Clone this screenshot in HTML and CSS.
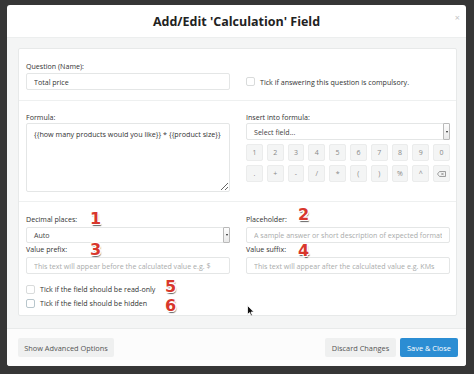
FILE: index.html
```html
<!DOCTYPE html>
<html>
<head>
<meta charset="utf-8">
<link rel="stylesheet" href="styles.css">
</head>
<body>
<div class="modal">
  <div class="header">
    <div class="title">Add/Edit 'Calculation' Field</div>
    <div class="close">×</div>
  </div>
  <div class="body">
    <div class="panel">
      <div class="section s1">
        <div class="col">
          <div class="label">Question (Name):</div>
          <input class="input" type="text" value="Total price">
        </div>
        <div class="col">
          <div class="label"></div>
          <label class="check inline"><input type="checkbox" class="cb"><span>Tick if answering this question is compulsory.</span></label>
        </div>
      </div>
      <div class="section s2">
        <div class="col">
          <div class="label">Formula:</div>
          <textarea class="textarea">{{how many products would you like}} * {{product size}}</textarea>
        </div>
        <div class="col">
          <div class="label">Insert into formula:</div>
          <div class="select"><span>Select field...</span><span class="arrow"></span></div>
          <div class="keypad">
            <button class="key">1</button><button class="key">2</button><button class="key">3</button><button class="key">4</button><button class="key">5</button><button class="key">6</button><button class="key">7</button><button class="key">8</button><button class="key">9</button><button class="key">0</button>
            <button class="key">.</button><button class="key">+</button><button class="key">-</button><button class="key">/</button><button class="key">*</button><button class="key">(</button><button class="key">)</button><button class="key">%</button><button class="key">^</button><button class="key"><svg width="9" height="6" viewBox="0 0 9 6"><path d="M2.5 0.5H8.5V5.5H2.5L0.5 3Z" fill="none" stroke="#888" stroke-width="0.8"/><path d="M4.3 1.8L6.6 4.2M6.6 1.8L4.3 4.2" stroke="#888" stroke-width="0.8"/></svg></button>
          </div>
        </div>
      </div>
      <div class="section s3">
        <div class="grid">
          <div class="col">
            <div class="label">Decimal places:</div>
            <div class="select short"><span class="val">Auto</span><span class="arrow"></span></div>
            <div class="label second">Value prefix:</div>
            <input class="input" type="text" placeholder="This text will appear before the calculated value e.g. $">
          </div>
          <div class="col">
            <div class="label">Placeholder:</div>
            <input class="input short" type="text" placeholder="A sample answer or short description of expected format">
            <div class="label second">Value suffix:</div>
            <input class="input" type="text" placeholder="This text will appear after the calculated value e.g. KMs">
          </div>
        </div>
        <div class="checks">
          <label class="check"><input type="checkbox" class="cb"><span>Tick if the field should be read-only</span></label>
          <label class="check"><input type="checkbox" class="cb focus"><span>Tick if the field should be hidden</span></label>
        </div>
      </div>
    </div>
  </div>
  <div class="footer">
    <button class="btn adv">Show Advanced Options</button>
    <div class="right">
      <button class="btn discard">Discard Changes</button>
      <button class="btn save">Save &amp; Close</button>
    </div>
  </div>
</div>

<span class="mark m1">1</span>
<span class="mark m2">2</span>
<span class="mark m3">3</span>
<span class="mark m4">4</span>
<span class="mark m5">5</span>
<span class="mark m6">6</span>

<svg class="cursor" width="8" height="12" viewBox="0 0 8 12"><path d="M0.5 0.5V9.5L2.6 7.6L4 11L5.4 10.4L4 7.1H6.9Z" fill="#111" stroke="#fff" stroke-width="0.8"/></svg>
</body>
</html>
```

FILE: styles.css
```css
* { box-sizing: border-box; }

body {
  margin: 0;
  width: 474px;
  height: 374px;
  overflow: hidden;
  position: relative;
  background: #363636;
  font-family: "Open Sans", "DejaVu Sans", sans-serif;
  padding: 5px 8px 8px 7px;
}

.modal {
  width: 459px;
  height: 361px;
  background: #fff;
  border-radius: 3px;
  display: flex;
  flex-direction: column;
  overflow: hidden;
}

.header {
  height: 33px;
  flex: none;
  display: flex;
  align-items: center;
  justify-content: center;
  position: relative;
  border-bottom: 1px solid #eceeee;
}

.title {
  font-size: 12.5px;
  font-weight: 700;
  color: #222;
}

.close {
  position: absolute;
  right: 6px;
  top: 6px;
  font-size: 9px;
  color: #c4c4c4;
}

.body {
  flex: none;
  height: 290px;
  background: #f4f5f5;
  padding: 10px 9px 10px 11px;
}

.panel {
  background: #fff;
  border: 1px solid #e7e9e9;
  border-radius: 2px;
}

.section {
  padding: 11px 6px 10px 7px;
  border-bottom: 1px solid #eef0f0;
}

.section:last-child { border-bottom: none; }

.s1, .s2, .grid {
  display: grid;
  grid-template-columns: 204px 204px;
  column-gap: 16px;
}

.s2 { padding-top: 10px; padding-bottom: 9px; }
.s3 { padding-bottom: 5px; }

.col { display: flex; flex-direction: column; }

.label {
  height: 12px;
  line-height: 12px;
  font-size: 7.1px;
  color: #333;
  margin-bottom: 1px;
}

.s3 .label { margin-bottom: 2px; }
.s2 .label { margin-bottom: 0; }

.input {
  height: 17px;
  width: 100%;
  border: 1px solid #e4e6e6;
  border-radius: 2px;
  padding: 0 7px;
  font-family: "Open Sans", sans-serif;
  font-size: 7.1px;
  color: #333;
  background: #fff;
  outline: none;
}

.input.short { height: 16px; }

.input::placeholder { color: #a9abab; }

.textarea {
  height: 69px;
  width: 100%;
  border: 1px solid #e4e6e6;
  border-radius: 2px;
  padding: 5px 7px;
  font-family: "Open Sans", sans-serif;
  font-size: 7.2px;
  line-height: 10px;
  color: #333;
  resize: both;
  outline: none;
}

.select {
  height: 17px;
  border: 1px solid #e4e6e6;
  border-radius: 2px;
  display: flex;
  align-items: center;
  justify-content: space-between;
  padding-left: 7px;
  font-size: 7.1px;
  color: #444;
  background: #fff;
}

.select.short { height: 16px; }

.select .arrow {
  width: 7px;
  height: calc(100% + 2px);
  margin-right: -1px;
  border: 1px solid #b9b9b9;
  border-radius: 1px;
  background: linear-gradient(#fdfdfd, #e9e9e9);
  position: relative;
}

.select .arrow::after {
  content: "";
  position: absolute;
  left: 1.5px;
  top: 50%;
  margin-top: -1px;
  border-left: 1.5px solid transparent;
  border-right: 1.5px solid transparent;
  border-top: 2px solid #222;
}

.keypad {
  margin-top: 4px;
  display: grid;
  grid-template-columns: repeat(10, 1fr);
  column-gap: 4px;
  row-gap: 4px;
}

.key {
  height: 17px;
  padding: 0;
  border: 1px solid #ebecec;
  border-radius: 2px;
  background: #f4f5f5;
  font-family: "Open Sans", sans-serif;
  font-size: 7px;
  color: #888;
  display: flex;
  align-items: center;
  justify-content: center;
}

.check {
  display: flex;
  align-items: center;
  gap: 5px;
  font-size: 7.1px;
  color: #333;
  height: 14px;
}

.check.inline { height: 17px; }

.cb {
  appearance: none;
  -webkit-appearance: none;
  margin: 0;
  width: 9px;
  height: 9px;
  border: 1px solid #d9dbdb;
  border-radius: 2px;
  background: #fff;
  flex: none;
}

.cb.focus { border-color: #b8c6cc; }

.checks { margin-top: 8px; }

.footer {
  flex: 1;
  border-top: 1px solid #e8eaea;
  background: #fcfcfc;
  padding: 9px 8px 9px 11px;
  display: flex;
  justify-content: space-between;
  align-items: flex-start;
}

.right { display: flex; gap: 4px; }

.btn {
  height: 19px;
  padding: 0;
  border: none;
  border-radius: 2px;
  font-family: "Open Sans", sans-serif;
  font-size: 7.4px;
  color: #555;
  background: #eff0f0;
}

.adv { width: 96px; }
.discard { width: 71px; }
.save { width: 58px; background: #2b8dd3; color: #fff; }

.mark {
  position: absolute;
  font-family: "DejaVu Sans", sans-serif;
  font-weight: 700;
  font-size: 16px;
  line-height: 1;
  color: #d8372c;
  text-shadow:
    1px 0 0 #fff, -1px 0 0 #fff, 0 1px 0 #fff, 0 -1px 0 #fff,
    1px 1px 0 #fff, -1px 1px 0 #fff, 1px -1px 0 #fff, -1px -1px 0 #fff,
    1px 2px 1px rgba(0,0,0,0.6);
}

.m1 { left: 90px; top: 211px; }
.m2 { left: 298px; top: 207px; }
.m3 { left: 90px; top: 242px; }
.m4 { left: 298px; top: 243px; }
.m5 { left: 165px; top: 279px; }
.m6 { left: 165px; top: 298px; }

.cursor {
  position: absolute;
  left: 247px;
  top: 305px;
}
```
